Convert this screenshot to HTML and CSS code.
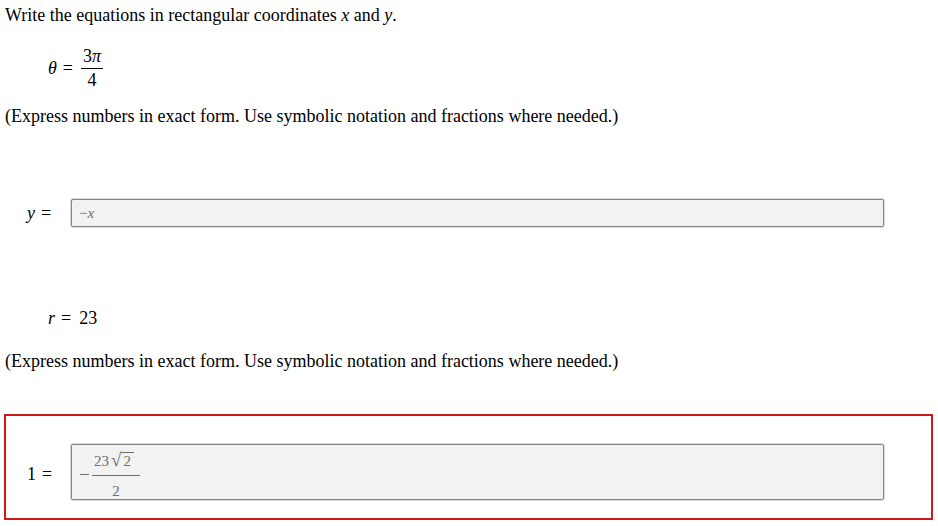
FILE: index.html
```html
<!DOCTYPE html>
<html lang="en">
<head>
    <meta charset="UTF-8">
    <title>Rectangular coordinates</title>
    <link rel="stylesheet" href="styles.css">
</head>
<body>
    <div class="question">
        <p class="prompt">Write the equations in rectangular coordinates <i>x</i> and <i>y</i>.</p>

        <div class="given">
            <i>θ</i><span class="eq">=</span>
            <span class="frac">
                <span class="num">3<i>π</i></span>
                <span class="den">4</span>
            </span>
        </div>

        <p class="note">(Express numbers in exact form. Use symbolic notation and fractions where needed.)</p>

        <div class="answer-row first">
            <span class="label"><i>y</i><span class="eq">=</span></span>
            <div class="answer-box short">
                <span class="entry">−<i>x</i></span>
            </div>
        </div>

        <div class="given r">
            <i>r</i><span class="eq">=</span>23
        </div>

        <p class="note">(Express numbers in exact form. Use symbolic notation and fractions where needed.)</p>

        <div class="wrong">
            <div class="answer-row">
                <span class="label low">1<span class="eq">=</span></span>
                <div class="answer-box tall">
                    <span class="entry">
                        <span class="minus"></span>
                        <span class="frac small">
                            <span class="num">23<span class="root"><span class="radical">√</span><span class="radicand">2</span></span></span>
                            <span class="den">2</span>
                        </span>
                    </span>
                </div>
            </div>
        </div>
    </div>
</body>
</html>
```

FILE: styles.css
```css
body {
    margin: 0;
    padding: 0;
    font-family: 'Liberation Serif', 'Times New Roman', serif;
    font-size: 18px;
    color: #000;
    background: #fff;
}
.question {
    padding: 3px 5px 0 5px;
}
.prompt {
    margin: 0;
    line-height: 24px;
}
.given {
    display: flex;
    align-items: center;
    margin: 21px 0 0 43px;
    height: 40px;
}
.eq {
    margin: 0 7px 0 6px;
}
.given .eq {
    margin-right: 8px;
}
.frac {
    display: inline-flex;
    flex-direction: column;
    align-items: center;
    line-height: 17px;
}
.frac .num {
    padding: 0 2px 3px 2px;
    border-bottom: 1px solid #000;
}
.frac .den {
    padding-top: 3px;
}
.note {
    margin: 16px 0 0 0;
    line-height: 24px;
}
.answer-row {
    display: flex;
    align-items: center;
}
.answer-row.first {
    margin-top: 71px;
}
.label {
    width: 66px;
    padding-left: 22px;
    box-sizing: border-box;
}
.label.low {
    margin-top: 5px;
}
.answer-box {
    width: 813px;
    box-sizing: border-box;
    background: #f2f2f2;
    border: 1px solid #858585;
    border-radius: 2px;
    box-shadow: 0 0 0 1px #dcdcdc;
    display: flex;
    align-items: center;
    padding-left: 7px;
    color: #6e6e6e;
}
.answer-box.short {
    height: 28px;
    font-size: 15px;
}
.answer-box.tall {
    height: 56px;
    font-size: 15px;
}
.given.r {
    margin-top: 76px;
    height: 30px;
}
.wrong {
    margin: 41px 0 0 -1px;
    width: 929px;
    height: 106px;
    border: 2px solid #d0161f;
    box-sizing: border-box;
    padding-top: 28px;
}
.wrong .label {
    padding-left: 21px;
    width: 65px;
}
.entry {
    display: inline-flex;
    align-items: center;
}
.minus {
    width: 9px;
    height: 1px;
    background: #6e6e6e;
    margin: 5px 3px 0 1px;
}
.frac.small {
    line-height: 14px;
    margin-top: 4px;
}
.frac.small .num {
    border-bottom-color: #6e6e6e;
    padding: 0 6px 7px 2px;
}
.frac.small .den {
    padding-top: 8px;
}
.root {
    display: inline-flex;
    align-items: flex-end;
}
.radical {
    font-size: 19px;
    line-height: 17px;
    margin-left: 2px;
}
.radicand {
    border-top: 1px solid #6e6e6e;
    padding: 1px 3px 0 2px;
    line-height: 14px;
}
```
